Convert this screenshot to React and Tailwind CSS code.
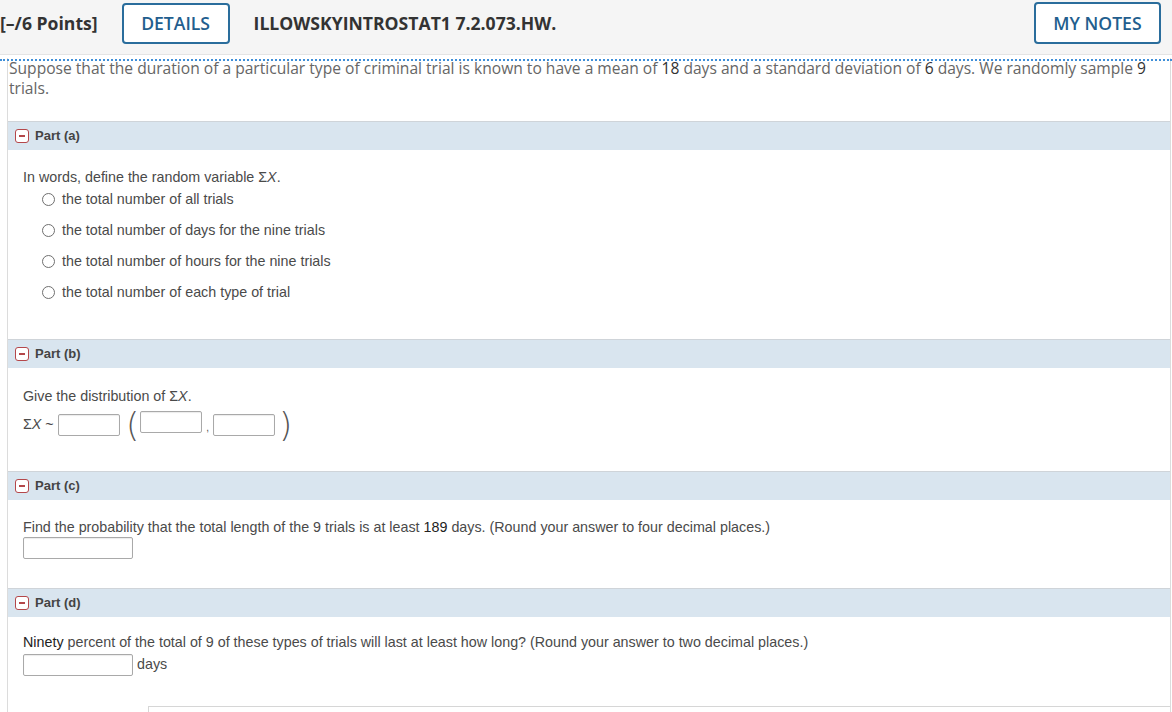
import React from 'react';

const PartHeader = ({ label }) => (
  <div className="flex items-center h-[29px] bg-[#d9e5ef] border-t border-[#cfd4d9] pl-[7px]">
    <span className="flex items-center justify-center w-[14px] h-[14px] border-[1.5px] border-[#b4474a] rounded-[3px] bg-white">
      <span className="block w-[6px] h-[2px] bg-[#b4474a]" />
    </span>
    <span className="ml-[6px] text-[13px] font-bold text-[#444]">{label}</span>
  </div>
);

const Radio = ({ children }) => (
  <label className="flex items-center h-[31px] pl-[19px]">
    <span className="w-[13px] h-[13px] rounded-full border border-[#6f6f6f] bg-white" />
    <span className="ml-[7px]">{children}</span>
  </label>
);

const Box = ({ w = 'w-[62px]', h = 'h-[22px]' }) => (
  <span className={`inline-block ${w} ${h} border border-[#a9a9a9] rounded-[2px] bg-white shadow-[inset_0_1px_1px_rgba(0,0,0,0.08)]`} />
);

const SumX = () => (
  <>
    Σ<i>X</i>
  </>
);

const options = [
  'the total number of all trials',
  'the total number of days for the nine trials',
  'the total number of hours for the nine trials',
  'the total number of each type of trial',
];

export default function App() {
  return (
    <div className="w-[1172px] h-[712px] overflow-hidden bg-white font-['Open_Sans',sans-serif]">
      {/* Header bar */}
      <div className="flex items-start pt-[2px] h-[55px] bg-[#f5f5f5] border-b border-[#e4e4e4]">
        <span className="mt-[9px] text-[17.6px] leading-[24px] font-bold text-[#333]">[–/6 Points]</span>
        <button className="ml-[24px] mt-[1px] w-[108px] h-[41px] border-2 border-[#2a6d9c] rounded-[4px] bg-white text-[17.6px] font-semibold text-[#225e8e]">
          DETAILS
        </button>
        <span className="ml-[24px] mt-[9px] text-[17.6px] leading-[24px] font-bold text-[#333]">ILLOWSKYINTROSTAT1 7.2.073.HW.</span>
        <button className="ml-auto mr-[11px] w-[127px] h-[42px] border-2 border-[#2a6d9c] rounded-[4px] bg-white text-[17.6px] font-semibold text-[#225e8e]">
          MY NOTES
        </button>
      </div>

      <div className="relative z-10 mt-[4px] border-t-2 border-dotted border-[#3f8fd8]" />

      <div className="ml-[7px] mr-[1px] border-l border-r border-[#dcdcdc]">
        <p className="-mt-[3px] pl-[1px] text-[15.6px] leading-[20px] text-[#666]">
          Suppose that the duration of a particular type of criminal trial is known to have a mean of <span className="text-[#333]">18</span> days and a standard deviation of <span className="text-[#333]">6</span> days. We randomly sample <span className="text-[#333]">9</span> trials.
        </p>

        <div className="font-['Liberation_Sans',Arial,sans-serif] text-[14.3px] text-[#4a4a4a]">
          {/* Part (a) */}
          <div className="mt-[23px]">
            <PartHeader label="Part (a)" />
            <div className="pl-[15px] pt-[20px] pb-[31px]">
              <p className="leading-[15px]">In words, define the random variable <SumX />.</p>
              <div className="-mt-[1px]">
                {options.map((o) => (
                  <Radio key={o}>{o}</Radio>
                ))}
              </div>
            </div>
          </div>

          {/* Part (b) */}
          <PartHeader label="Part (b)" />
          <div className="pl-[15px] pt-[21px] pb-[34px]">
            <p className="leading-[15px]">Give the distribution of <SumX />.</p>
            <div className="flex items-center mt-[9px] h-[24px]">
              <span className="w-[35px]"><SumX /> ~</span>
              <Box />
              <span className="ml-[6px] text-[34px] leading-[34px] font-extralight text-[#555] font-['DejaVu_Sans',sans-serif]">(</span>
              <span className="ml-[1px]"><Box /></span>
              <span className="mx-[4px] text-[10px] self-end mb-[2px]">,</span>
              <Box />
              <span className="ml-[4px] text-[34px] leading-[34px] font-extralight text-[#555] font-['DejaVu_Sans',sans-serif]">)</span>
            </div>
          </div>

          {/* Part (c) */}
          <PartHeader label="Part (c)" />
          <div className="pl-[15px] pt-[20px] pb-[29px]">
            <p className="leading-[15px]">
              Find the probability that the total length of the 9 trials is at least <span className="text-[#222]">189</span> days. (Round your answer to four decimal places.)
            </p>
            <div className="mt-[2px] flex">
              <Box w="w-[110px]" />
            </div>
          </div>

          {/* Part (d) */}
          <PartHeader label="Part (d)" />
          <div className="pl-[15px] pt-[18px]">
            <p className="leading-[15px]">
              <span className="text-[#222]">Ninety</span> percent of the total of 9 of these types of trials will last at least how long? (Round your answer to two decimal places.)
            </p>
            <div className="mt-[4px] flex items-center">
              <Box w="w-[110px]" />
              <span className="ml-[4px]">days</span>
            </div>
            <div className="mt-[30px] ml-[125px] h-[20px] border-t border-l border-[#d6d6d6]" />
          </div>
        </div>
      </div>
    </div>
  );
}
